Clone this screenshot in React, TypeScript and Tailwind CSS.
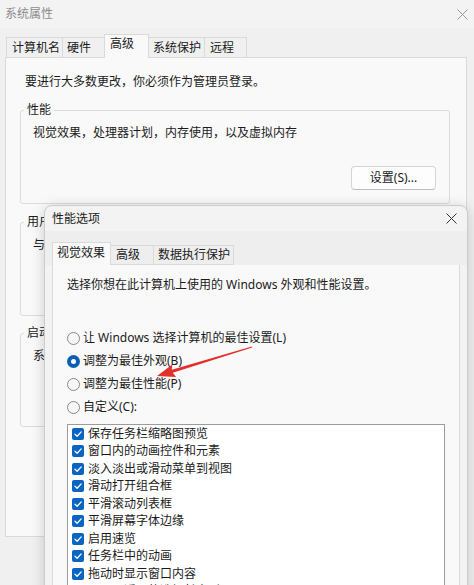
import React from "react";

function CloseIcon({ className }: { className: string }) {
  return (
    <svg width="11" height="11" viewBox="0 0 11 11" className={className}>
      <path d="M0.5 0.5 L10.5 10.5 M10.5 0.5 L0.5 10.5" stroke="currentColor" strokeWidth="1" />
    </svg>
  );
}

function Button({ label }: { label: string }) {
  return (
    <div className="flex h-[24px] w-[85px] items-center justify-center rounded-[4px] border border-[#d4d4d4] border-b-[#bdbdbd] bg-[#fdfdfd]">
      {label}
    </div>
  );
}

function Group({ title, text, button }: { title: string; text: string; button: string }) {
  return (
    <fieldset className="ml-[14px] w-[430px] rounded-[3px] border border-[#dcdcdc]">
      <legend className="ml-[3px] px-[3px]">{title}</legend>
      <div className="pl-[12px] pr-[13px] pt-[7px] pb-[13px]">
        <p className="whitespace-nowrap">{text}</p>
        <div className="mt-[25px] flex justify-end">
          <Button label={button} />
        </div>
      </div>
    </fieldset>
  );
}

function Radio({ label, checked }: { label: string; checked?: boolean }) {
  return (
    <div className="flex h-[23px] items-center gap-[3px] pl-[14px]">
      {checked ? (
        <span className="flex h-[13px] w-[13px] items-center justify-center rounded-full bg-[#0a5fb4]">
          <span className="h-[5px] w-[5px] rounded-full bg-white" />
        </span>
      ) : (
        <span className="h-[13px] w-[13px] rounded-full border border-[#8a8a8a] bg-[#f6f6f6]" />
      )}
      <span className="whitespace-nowrap">{label}</span>
    </div>
  );
}

function CheckItem({ label }: { label: string }) {
  return (
    <div className="flex h-[17.5px] items-center gap-[4px] pl-[4px]">
      <span className="flex h-[12px] w-[12px] items-center justify-center rounded-[2px] bg-[#0a64c2]">
        <svg width="12" height="12" viewBox="0 0 12 12">
          <path d="M3 6.3 L5.1 8.3 L9.2 3.9" fill="none" stroke="white" strokeWidth="1.3" strokeLinecap="round" strokeLinejoin="round" />
        </svg>
      </span>
      <span className="whitespace-nowrap">{label}</span>
    </div>
  );
}

const effects = [
  "保存任务栏缩略图预览",
  "窗口内的动画控件和元素",
  "淡入淡出或滑动菜单到视图",
  "滑动打开组合框",
  "平滑滚动列表框",
  "平滑屏幕字体边缘",
  "启用速览",
  "任务栏中的动画",
  "拖动时显示窗口内容",
  "显示亚透明的选择长方形",
];

export default function App() {
  return (
    <div className="relative h-[585px] w-[474px] overflow-hidden bg-[#f0f0f0] font-['Noto_Sans','Noto_Sans_CJK_SC',sans-serif] text-[12px] leading-[16px] text-[#1b1b1b]">
      {/* 系统属性 window */}
      <div className="flex h-full flex-col">
        <div className="flex h-[28px] shrink-0 items-center justify-between bg-[#f3f3f3] pl-[5px] pr-[6px]">
          <span className="text-[#8c8c8c]">系统属性</span>
          <CloseIcon className="text-[#9a9a9a]" />
        </div>
        <div className="relative z-10 -mb-px flex h-[30px] shrink-0 items-end pl-[6px]">
          <div className="flex h-[21px] w-[57px] items-center border border-[#dadada] bg-[#f0f0f0] pl-[5px]">计算机名</div>
          <div className="-ml-px flex h-[21px] w-[43px] items-center border border-[#dadada] bg-[#f0f0f0] pl-[4px]">硬件</div>
          <div className="relative z-10 -ml-px flex h-[24px] w-[45px] items-start border border-b-0 border-[#dadada] bg-[#f9f9f9] pl-[5px] pt-[1px]">高级</div>
          <div className="-ml-px flex h-[21px] w-[57px] items-center border border-[#dadada] bg-[#f0f0f0] pl-[4px]">系统保护</div>
          <div className="-ml-px flex h-[21px] w-[43px] items-center border border-[#dadada] bg-[#f0f0f0] pl-[5px]">远程</div>
        </div>
        <div className="ml-[5px] flex h-[480px] w-[462px] shrink-0 flex-col border border-[#dadada] bg-[#f9f9f9] pt-[16px]">
          <p className="ml-[19px]">要进行大多数更改，你必须作为管理员登录。</p>
          <div className="mt-[12px]">
            <Group title="性能" text="视觉效果，处理器计划，内存使用，以及虚拟内存" button="设置(S)..." />
          </div>
          <div className="mt-[10px]">
            <Group title="用户配置文件" text="与登录帐户相关的桌面设置" button="设置(E)..." />
          </div>
          <div className="mt-[9px]">
            <Group title="启动和故障恢复" text="系统启动、系统故障和调试信息" button="设置(T)..." />
          </div>
          <div className="mr-[14px] mt-[10px] flex justify-end">
            <div className="flex h-[24px] w-[100px] items-center justify-center rounded-[4px] border border-[#d4d4d4] bg-[#fdfdfd]">环境变量(N)...</div>
          </div>
        </div>
        <div className="mr-[8px] mt-[12px] flex justify-end gap-[8px]">
          <Button label="确定" />
          <Button label="取消" />
          <Button label="应用(A)" />
        </div>
      </div>

      {/* 性能选项 dialog on top */}
      <div className="absolute left-[44px] top-[205px] flex h-[400px] w-[424px] flex-col rounded-t-[8px] border border-[#cccccc] bg-[#f3f3f3] shadow-[0_2px_14px_rgba(0,0,0,0.18)]">
        <div className="flex h-[25px] shrink-0 items-center justify-between pl-[7px] pr-[10px]">
          <span>性能选项</span>
          <CloseIcon className="text-[#333333]" />
        </div>
        <div className="relative z-10 -mb-px flex h-[34px] shrink-0 items-end bg-[#eeeeee] pl-[7px]">
          <div className="relative z-10 flex h-[23px] w-[59px] items-start border border-b-0 border-[#dadada] bg-[#f9f9f9] pl-[4px] pt-[2px]">视觉效果</div>
          <div className="-ml-px flex h-[20px] w-[44px] items-center border border-[#dadada] bg-[#eeeeee] pl-[5px]">高级</div>
          <div className="-ml-px flex h-[20px] w-[81px] items-center border border-[#dadada] bg-[#eeeeee] pl-[4px]">数据执行保护</div>
        </div>
        <div className="ml-[7px] w-[408px] flex-1 border border-[#dadada] bg-[#f9f9f9] pt-[12px]">
          <p className="pl-[14px]">选择你想在此计算机上使用的 Windows 外观和性能设置。</p>
          <div className="mt-[33.5px]">
            <Radio label="让 Windows 选择计算机的最佳设置(L)" />
            <Radio label="调整为最佳外观(B)" checked />
            <Radio label="调整为最佳性能(P)" />
            <Radio label="自定义(C):" />
          </div>
          <div className="ml-[14px] mt-[5.5px] h-[200px] w-[378px] border border-[#9c9c9c] bg-white">
            {effects.map((e) => (
              <CheckItem key={e} label={e} />
            ))}
          </div>
        </div>
      </div>

      {/* red pointer arrow */}
      <svg className="pointer-events-none absolute left-0 top-0" width="474" height="585" viewBox="0 0 474 585">
        <polygon
          points="157,376 172.3,364.5 171.8,369.8 251.8,346.4 252.2,347.6 172.8,372.8 176.1,376.9"
          fill="#e3302a"
        />
      </svg>
    </div>
  );
}
